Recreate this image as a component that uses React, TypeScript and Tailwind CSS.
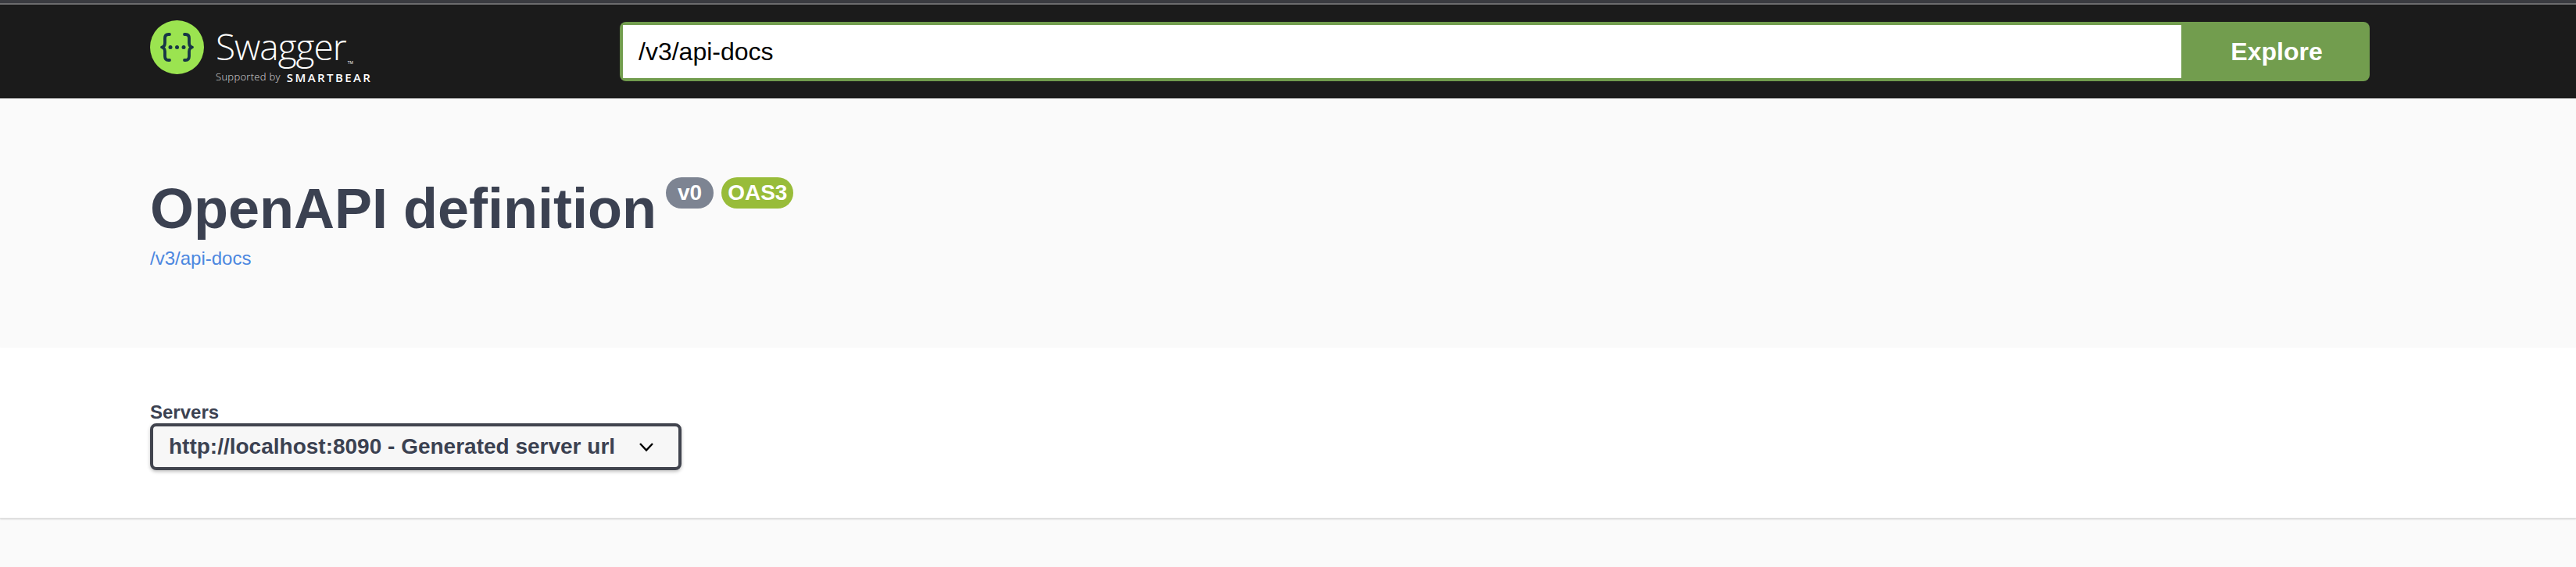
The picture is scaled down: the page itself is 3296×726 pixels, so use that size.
import React from 'react';

const SwaggerLogo: React.FC = () => (
  <div className="flex items-start">
    <svg width="69" height="69" viewBox="0 0 69 69" className="shrink-0">
      <circle cx="34.5" cy="34.5" r="34.5" fill="#9be450" />
      <g fill="none" stroke="#173646" strokeWidth="3.8" strokeLinecap="round" strokeLinejoin="round">
        <path d="M25 18 H23.5 C20.5 18 19 20 19 23 V29 C19 32 17.5 34 15 34.5 C17.5 35 19 37 19 40 V46 C19 49 20.5 51 23.5 51 H25" />
        <path d="M44 18 H45.5 C48.5 18 50 20 50 23 V29 C50 32 51.5 34 54 34.5 C51.5 35 50 37 50 40 V46 C50 49 48.5 51 45.5 51 H44" />
      </g>
      <circle cx="26" cy="34.5" r="2.5" fill="#173646" />
      <circle cx="34.5" cy="34.5" r="2.5" fill="#173646" />
      <circle cx="43" cy="34.5" r="2.5" fill="#173646" />
    </svg>
    <div className="ml-[15px] text-white font-['Open_Sans',sans-serif]">
      <div className="flex items-end h-[60px] mt-[3px]">
        <span className="text-[46px] leading-[60px] font-light tracking-[-1px]">Swagger</span>
        <span className="text-[5px] leading-[18px] ml-[2px]">TM</span>
      </div>
      <div className="flex items-center h-[20px]">
        <span className="text-[13px] font-light tracking-[0.3px] text-[#dddddd]">Supported by</span>
        <span className="ml-[8px] text-[15px] font-semibold tracking-[2.4px]">SMARTBEAR</span>
      </div>
    </div>
  </div>
);

const App: React.FC = () => {
  return (
    <div className="h-[726px] bg-[#fafafa] font-['Liberation_Sans',sans-serif] overflow-hidden">
      <div className="h-[4px] bg-[#3a3b40]" />
      <div className="h-[2px] bg-[#6b6b6d]" />
      <header className="h-[120px] bg-[#1b1b1b] flex items-start pl-[192px] pr-[264px]">
        <div className="w-[601px] pt-[20px] shrink-0">
          <SwaggerLogo />
        </div>
        <div className="flex-1 flex h-[76px] mt-[22px] rounded-[8px] bg-[#729d4e] overflow-hidden">
          <input
            readOnly
            value="/v3/api-docs"
            className="w-[1994px] h-[68px] my-[4px] ml-[4px] pl-[20px] bg-white text-black text-[32px] outline-none"
          />
          <button className="flex-1 text-white text-[32px] font-bold pl-[3px]">Explore</button>
        </div>
      </header>

      <section className="h-[319px] pl-[192px] pt-[98px]">
        <div className="flex items-start">
          <h2 className="text-[72px] leading-[86px] font-bold text-[#3b4151]">OpenAPI definition</h2>
          <span className="ml-[12px] mt-[3px] h-[40px] px-[15px] rounded-[20px] bg-[#7d8492] text-white text-[28px] leading-[40px] font-bold">v0</span>
          <span className="ml-[10px] mt-[3px] h-[40px] px-[8px] rounded-[20px] bg-[#98bc39] text-white text-[28px] leading-[40px] font-bold">OAS3</span>
        </div>
        <a className="block text-[24px] leading-[28px] text-[#4c87e0] mt-[7px]">/v3/api-docs</a>
      </section>

      <section className="h-[219px] bg-white pl-[192px] pt-[69px] border-b border-[#dfdfdf] shadow-[0_1px_2px_rgba(0,0,0,0.15)]">
        <div className="text-[24px] leading-[28px] font-bold text-[#3b4151]">Servers</div>
        <div className="w-[680px] h-[60px] border-[4px] border-[#41444e] rounded-[8px] bg-[#f7f7f7] shadow-[0_2px_4px_rgba(0,0,0,0.25)] flex items-center pl-[20px]">
          <span className="text-[28px] font-bold text-[#3b4151] whitespace-nowrap">http://localhost:8090 - Generated server url</span>
          <svg width="20" height="20" viewBox="0 0 20 20" className="ml-[30px]" fill="none" stroke="#000" strokeWidth="2.5">
            <path d="M2 6 L10 14.5 L18 6" />
          </svg>
        </div>
      </section>
    </div>
  );
};

export default App;
